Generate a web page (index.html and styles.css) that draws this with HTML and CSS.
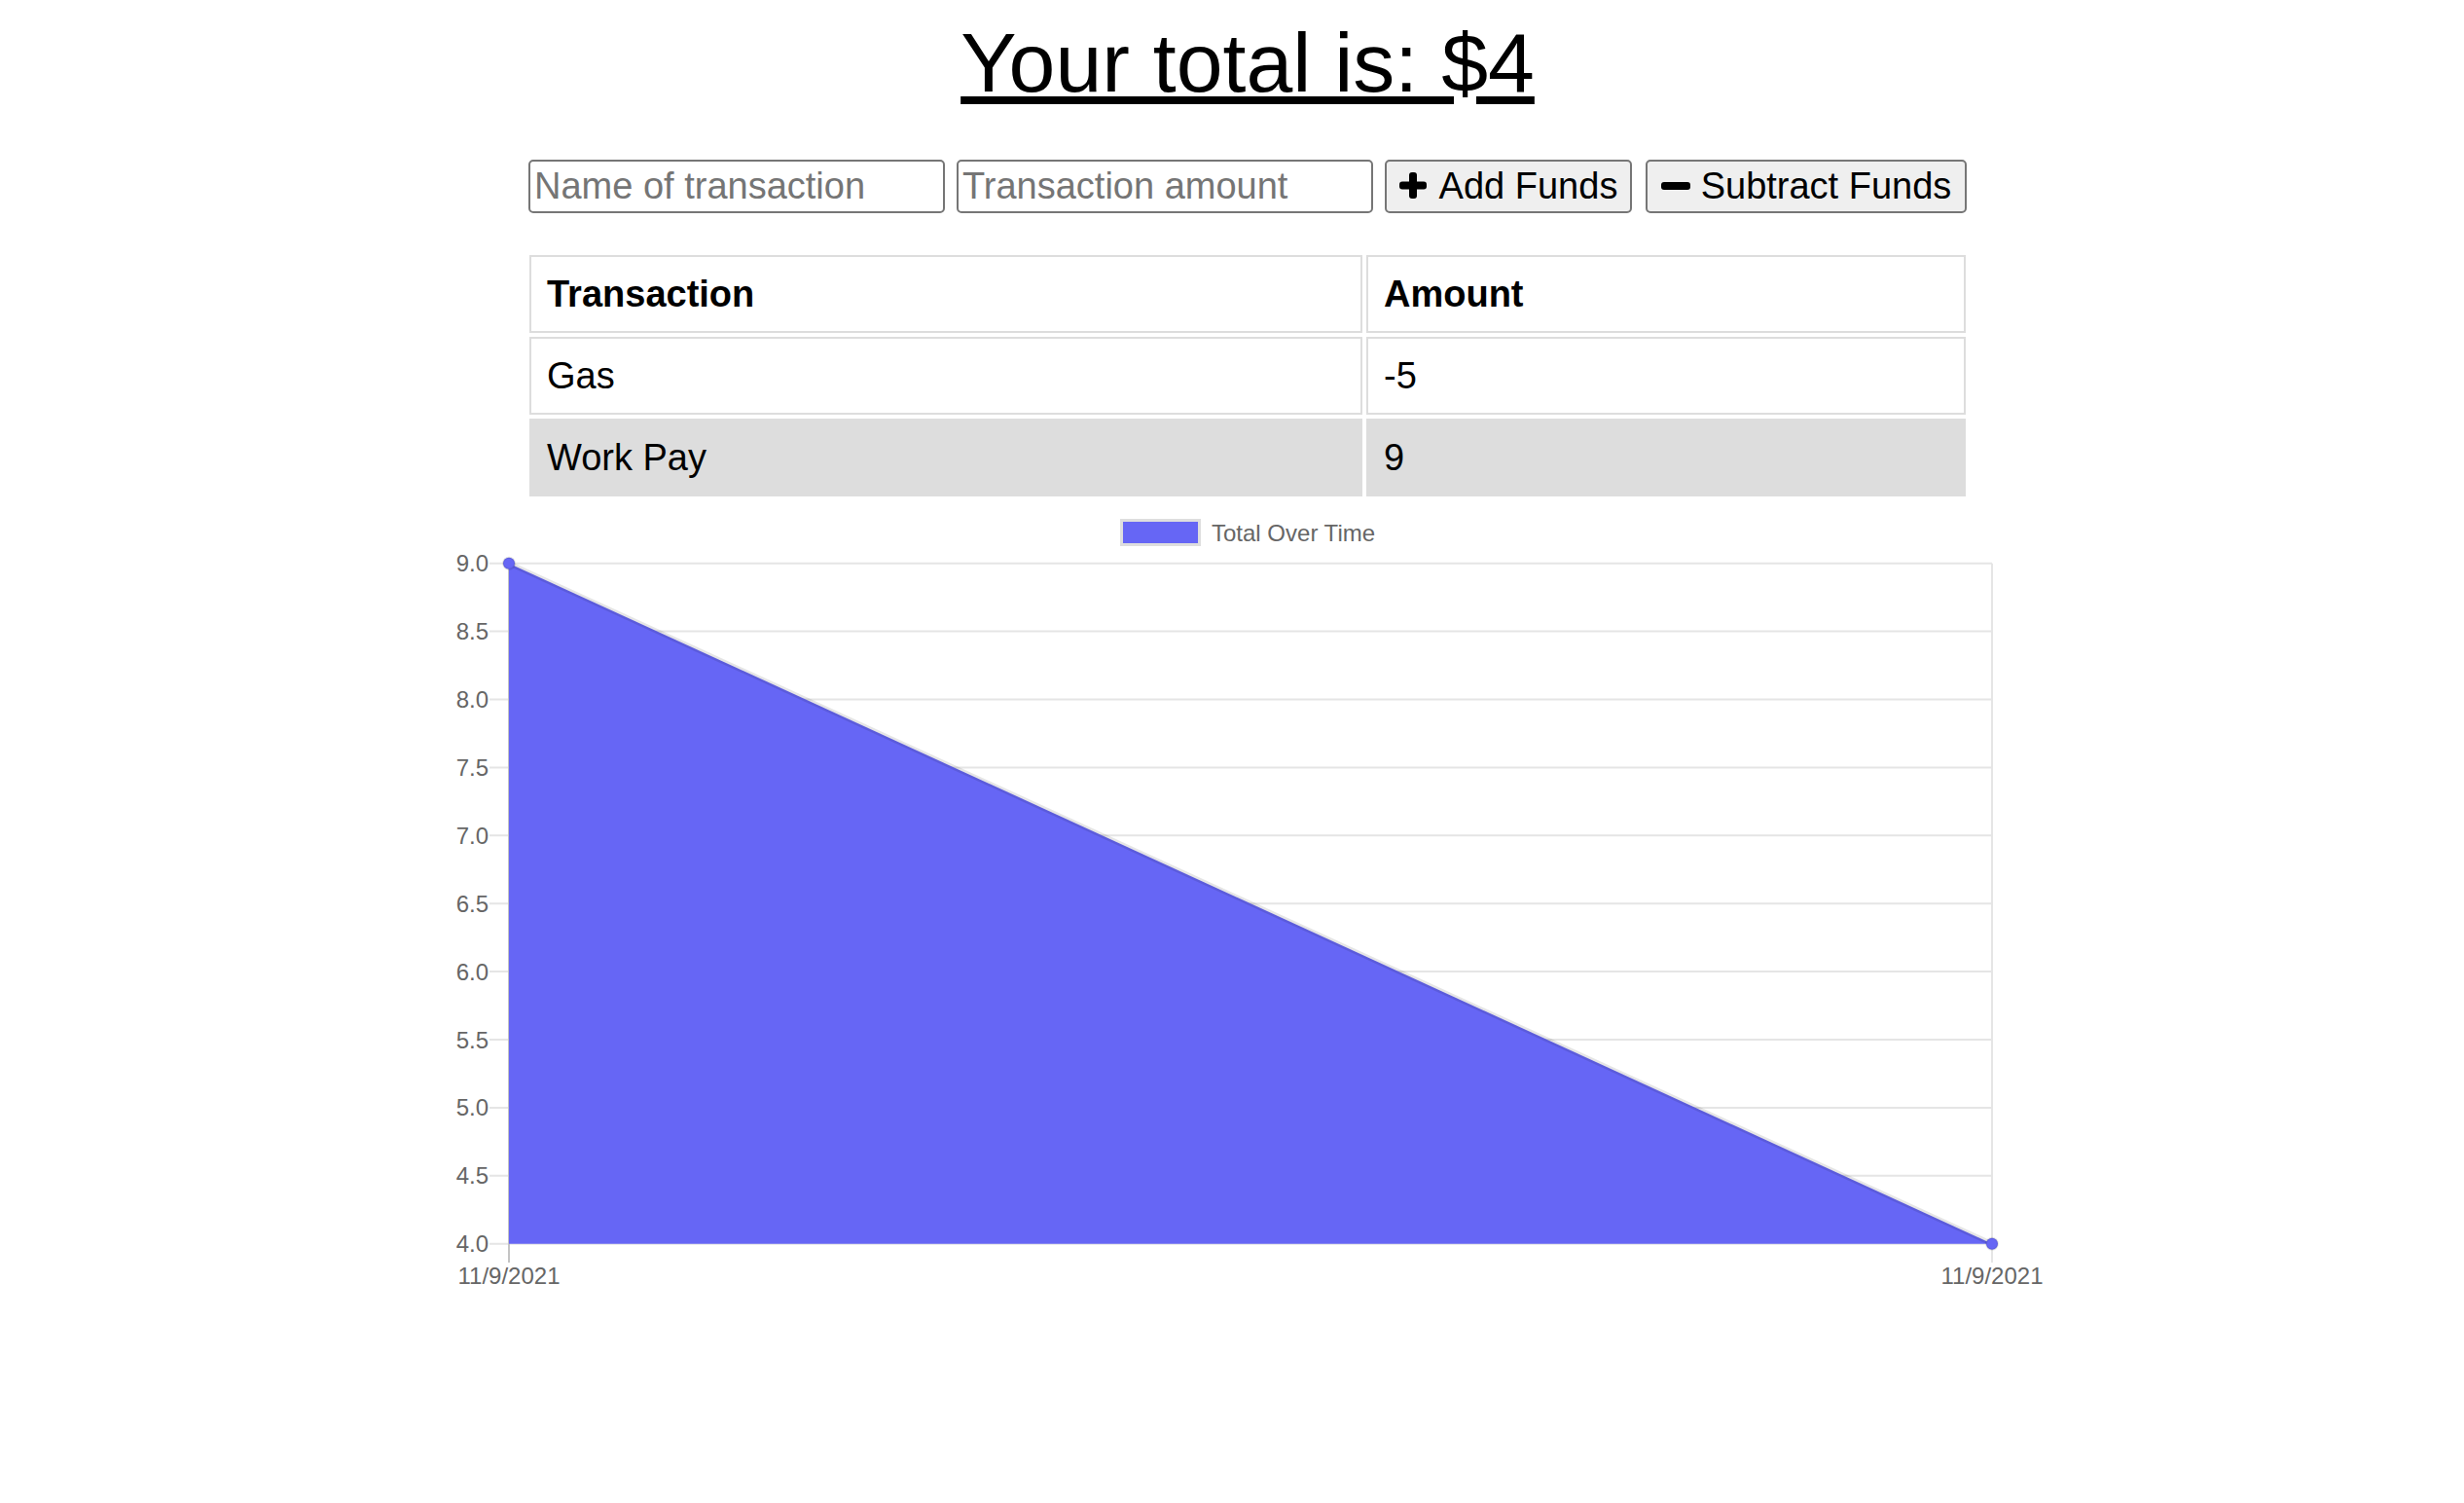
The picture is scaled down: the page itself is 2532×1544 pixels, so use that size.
FILE: index.html
```html
<!DOCTYPE html>
<html lang="en">
<head>
<meta charset="utf-8">
<title>Budget Tracker</title>
<link rel="stylesheet" href="styles.css">
</head>
<body>
<h1 class="total">Your total is: $<span id="total">4</span></h1>

<div class="form-row">
  <input class="field" type="text" placeholder="Name of transaction">
  <input class="field" type="text" placeholder="Transaction amount">
  <button class="btn btn-add" type="button">
    <svg class="icon icon-plus" viewBox="0 0 28 27" width="28" height="27" aria-hidden="true">
      <rect x="0" y="9.5" width="28" height="8" rx="3"/>
      <rect x="10" y="0" width="8" height="27" rx="3"/>
    </svg>Add Funds</button>
  <button class="btn btn-sub" type="button">
    <svg class="icon icon-minus" viewBox="0 0 30 8" width="30" height="8" aria-hidden="true">
      <rect x="0" y="0" width="30" height="8" rx="3"/>
    </svg>Subtract Funds</button>
</div>

<table class="tx">
  <thead>
    <tr><th>Transaction</th><th>Amount</th></tr>
  </thead>
  <tbody>
    <tr><td>Gas</td><td>-5</td></tr>
    <tr><td>Work Pay</td><td>9</td></tr>
  </tbody>
</table>

<svg class="chart" viewBox="432 513 1700 830" width="1700" height="830">
  <g class="legend">
    <rect x="1152.5" y="533.5" width="80" height="25" class="legend-box"/>
    <text x="1245" y="554.5" class="lbl">Total Over Time</text>
  </g>
  <g class="grid">
    <line x1="503" y1="577.7" x2="2047" y2="577.7"/>
    <line x1="503" y1="647.6" x2="2047" y2="647.6"/>
    <line x1="503" y1="717.5" x2="2047" y2="717.5"/>
    <line x1="503" y1="787.4" x2="2047" y2="787.4"/>
    <line x1="503" y1="857.3" x2="2047" y2="857.3"/>
    <line x1="503" y1="927.2" x2="2047" y2="927.2"/>
    <line x1="503" y1="997.1" x2="2047" y2="997.1"/>
    <line x1="503" y1="1067" x2="2047" y2="1067"/>
    <line x1="503" y1="1136.9" x2="2047" y2="1136.9"/>
    <line x1="503" y1="1206.8" x2="2047" y2="1206.8"/>
    <line x1="503" y1="1276.7" x2="2047" y2="1276.7"/>
    <line x1="2047" y1="577.7" x2="2047" y2="1296"/>
    <line class="zero" x1="523" y1="577.7" x2="523" y2="1296"/>
  </g>
  <g class="ylabels">
    <text x="502" y="586.2">9.0</text>
    <text x="502" y="656.1">8.5</text>
    <text x="502" y="726">8.0</text>
    <text x="502" y="795.9">7.5</text>
    <text x="502" y="865.8">7.0</text>
    <text x="502" y="935.7">6.5</text>
    <text x="502" y="1005.6">6.0</text>
    <text x="502" y="1075.5">5.5</text>
    <text x="502" y="1145.4">5.0</text>
    <text x="502" y="1215.3">4.5</text>
    <text x="502" y="1285.2">4.0</text>
  </g>
  <g class="xlabels">
    <text x="523" y="1318">11/9/2021</text>
    <text x="2047" y="1318">11/9/2021</text>
  </g>
  <polygon class="area" points="523,577.7 2047,1276.7 523,1276.7"/>
  <line class="series" x1="523" y1="577.7" x2="2047" y2="1276.7"/>
  <circle class="pt" cx="523" cy="577.7" r="6"/>
  <circle class="pt" cx="2047" cy="1276.7" r="6"/>
</svg>
</body>
</html>
```

FILE: styles.css
```css
html, body {
  background: #ffffff;
}

body {
  margin: 0;
  padding: 0 0 0 32px;
  font-family: "Liberation Sans", Arial, sans-serif;
  color: #000;
}

.total {
  margin: 16px 0 0;
  font-size: 86px;
  line-height: 96px;
  font-weight: normal;
  text-align: center;
  text-decoration: underline;
}

.form-row {
  margin-top: 52px;
  display: flex;
  justify-content: center;
  align-items: stretch;
  gap: 12px;
  height: 55px;
}

.field {
  box-sizing: border-box;
  width: 428px;
  height: 55px;
  margin: 0;
  padding: 0 4px;
  border: 2px solid #767676;
  border-radius: 5px;
  font-family: "Liberation Sans", Arial, sans-serif;
  font-size: 38px;
  color: #000;
  background: #fff;
}

.field::placeholder {
  color: #757575;
}

.btn {
  box-sizing: border-box;
  height: 55px;
  margin: 0;
  padding: 0;
  display: inline-flex;
  align-items: center;
  justify-content: center;
  border: 2px solid #767676;
  border-radius: 5px;
  background: #efefef;
  font-family: "Liberation Sans", Arial, sans-serif;
  font-size: 38px;
  color: #000;
}

.btn-add {
  width: 254px;
}

.btn-sub {
  width: 330px;
  margin-left: 2px;
}

.icon {
  fill: #000;
  display: block;
  flex: none;
}

.icon-plus {
  margin-right: 13px;
  margin-top: -3px;
}

.icon-minus {
  margin-right: 11px;
  margin-top: -2px;
}

.tx {
  margin: 39px auto 0;
  width: 1484px;
  border-collapse: separate;
  border-spacing: 4px;
  font-size: 38px;
}

.tx th,
.tx td {
  border: 2px solid #dddddd;
  padding: 16px;
  line-height: 44px;
  text-align: left;
}

.tx th {
  font-weight: bold;
}

.tx th:first-child,
.tx td:first-child {
  width: 820px;
}

.tx tbody tr:nth-child(even) td {
  background: #dddddd;
}

.chart {
  display: block;
  margin: 0 auto;
  font-family: "Liberation Sans", Arial, sans-serif;
}

.chart text {
  font-size: 24px;
  fill: #666666;
}

.legend-box {
  fill: #6666f5;
  stroke: #dedede;
  stroke-width: 3;
}

.grid line {
  stroke: #e5e5e5;
  stroke-width: 2;
}

.grid line.zero {
  stroke: #c4c4c4;
}

.ylabels text {
  text-anchor: end;
}

.xlabels text {
  text-anchor: middle;
}

.area {
  fill: #6666f5;
}

.series {
  stroke: rgba(0, 0, 0, 0.1);
  stroke-width: 5;
}

.pt {
  fill: #6666f5;
  stroke: rgba(0, 0, 0, 0.1);
  stroke-width: 2;
}
```
